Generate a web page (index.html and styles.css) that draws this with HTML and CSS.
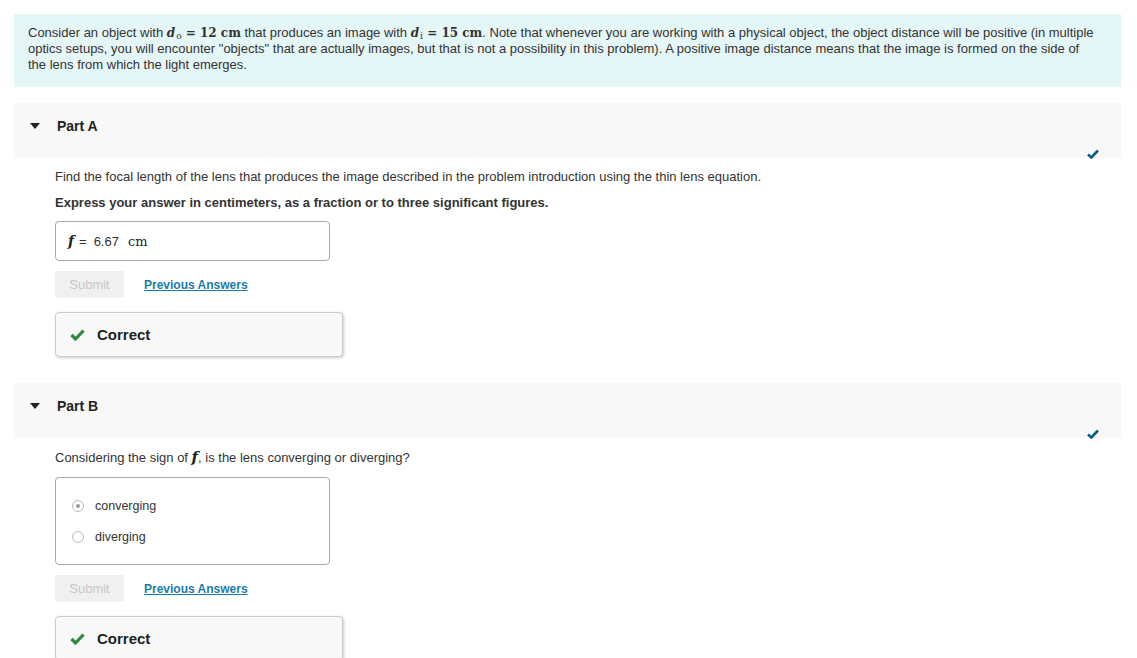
FILE: index.html
```html
<!DOCTYPE html>
<html>
<head>
<meta charset="utf-8">
<link rel="stylesheet" href="styles.css">
</head>
<body>
<div class="page">
  <div class="intro">Consider an object with <span class="m"><i>d</i><sub>o</sub> = 12 cm</span> that produces an image with <span class="m"><i>d</i><sub>i</sub> = 15 cm</span>. Note that whenever you are working with a physical object, the object distance will be positive (in multiple optics setups, you will encounter "objects" that are actually images, but that is not a possibility in this problem). A positive image distance means that the image is formed on the side of the lens from which the light emerges.</div>

  <div class="part">
    <div class="part-head">
      <span class="caret"></span>
      <span class="part-title">Part A</span>
      <svg class="done" width="12" height="10" viewBox="0 0 12 10"><path d="M1 5.5 L4.3 8.5 L11 1.5" fill="none" stroke="#0f5f80" stroke-width="2.6"/></svg>
    </div>
    <div class="part-body">
      <p class="q">Find the focal length of the lens that produces the image described in the problem introduction using the thin lens equation.</p>
      <p class="instr">Express your answer in centimeters, as a fraction or to three significant figures.</p>
      <div class="answer"><span class="fvar">f</span><span class="eq">=</span><span class="val">6.67</span><span class="unit">cm</span></div>
      <div class="actions"><span class="submit">Submit</span><a class="prev" href="#">Previous Answers</a></div>
      <div class="correct"><svg width="15" height="12" viewBox="0 0 15 12"><path d="M1.5 6 L5.5 10 L13.5 1.5" fill="none" stroke="#2b8a3e" stroke-width="3.2"/></svg><span>Correct</span></div>
    </div>
  </div>

  <div class="part">
    <div class="part-head">
      <span class="caret"></span>
      <span class="part-title">Part B</span>
      <svg class="done" width="12" height="10" viewBox="0 0 12 10"><path d="M1 5.5 L4.3 8.5 L11 1.5" fill="none" stroke="#0f5f80" stroke-width="2.6"/></svg>
    </div>
    <div class="part-body">
      <p class="q">Considering the sign of <span class="fvar">f</span>, is the lens converging or diverging?</p>
      <div class="choices">
        <div class="choice"><span class="radio on"></span>converging</div>
        <div class="choice"><span class="radio"></span>diverging</div>
      </div>
      <div class="actions"><span class="submit">Submit</span><a class="prev" href="#">Previous Answers</a></div>
      <div class="correct"><svg width="15" height="12" viewBox="0 0 15 12"><path d="M1.5 6 L5.5 10 L13.5 1.5" fill="none" stroke="#2b8a3e" stroke-width="3.2"/></svg><span>Correct</span></div>
    </div>
  </div>
</div>
</body>
</html>
```

FILE: styles.css
```css
html, body { margin: 0; padding: 0; background: #fff; }
body { font-family: "Liberation Sans", Arial, sans-serif; font-size: 13px; color: #333; overflow: hidden; height: 658px; }
.page { padding: 14px 16px 0 14px; }
.intro {
  background: #e5f6f7;
  padding: 11px 26px 14px 14px;
  line-height: 16px;
  margin-bottom: 16px;
  height: 48px;
}
.m { font-family: "DejaVu Serif", "Liberation Serif", serif; font-weight: bold; font-size: 12px; }
.m i { font-style: italic; }
.m sub { font-size: 9px; vertical-align: -2px; line-height: 9px; font-weight: normal; margin-left: 1px; }
.part { margin-bottom: 26px; }
.part-head {
  position: relative;
  background: #f8f8f8;
  height: 55px;
  display: flex;
  align-items: flex-start;
  padding-top: 15px;
  box-sizing: border-box;
}
.caret {
  width: 0; height: 0;
  border-left: 5px solid transparent;
  border-right: 5px solid transparent;
  border-top: 6px solid #222;
  margin: 5px 17px 0 16px;
}
.part-title { font-size: 14px; font-weight: bold; line-height: 16px; color: #222; }
.done { position: absolute; right: 22px; bottom: -1px; }
.part-body { padding-left: 41px; padding-top: 11px; }
.q { margin: 0; line-height: 16px; }
.q .fvar { font-size: 15px; }
.instr { margin: 10px 0 0 0; font-weight: bold; font-size: 13px; line-height: 16px; }
.answer {
  margin-top: 10px;
  width: 275px; height: 40px; box-sizing: border-box;
  border: 1px solid #aaa; border-radius: 4px;
  display: flex; align-items: center;
  padding-left: 12px;
}
.fvar { font-family: "DejaVu Serif", "Liberation Serif", serif; font-style: italic; font-weight: bold; font-size: 14px; color: #222; }
.eq { margin: 0 7px 0 5px; font-size: 13px; }
.val { font-size: 13px; margin-right: 9px; }
.unit { font-family: "DejaVu Serif", "Liberation Serif", serif; font-size: 13px; color: #222; }
.actions { display: flex; align-items: center; margin-top: 10px; }
.submit {
  width: 69px; height: 27px; line-height: 27px; text-align: center;
  background: #f0f0f0; color: #c8c8c8; font-size: 13px; border-radius: 2px;
}
.prev { margin-left: 20px; color: #1a7bab; font-weight: bold; font-size: 12px; text-decoration: underline; }
.correct {
  margin-top: 14px;
  width: 288px; height: 45px; box-sizing: border-box;
  background: #f8f8f8; border: 1px solid #ccc; border-radius: 4px;
  box-shadow: 1px 1px 3px rgba(0,0,0,0.2);
  display: flex; align-items: center;
  padding-left: 14px;
  font-size: 15px; font-weight: bold; color: #222;
}
.correct svg { margin-right: 12px; }
.choices {
  margin-top: 11px;
  width: 275px; height: 88px; box-sizing: border-box;
  border: 1px solid #aaa; border-radius: 4px;
  padding-top: 20px; padding-left: 16px;
}
.choice { display: flex; align-items: center; height: 16px; margin-bottom: 15px; font-size: 12.5px; }
.radio {
  width: 12px; height: 12px; box-sizing: border-box;
  border: 1px solid #bbb; border-radius: 50%;
  margin-right: 11px; position: relative; background: #fff;
}
.radio.on::after {
  content: ""; position: absolute; left: 3px; top: 3px; width: 4px; height: 4px;
  border-radius: 50%; background: #999;
}
```
